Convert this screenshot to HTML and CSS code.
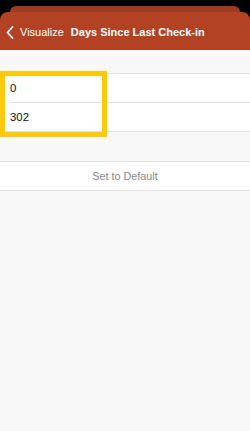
FILE: index.html
```html
<!DOCTYPE html>
<html>
<head>
<meta charset="utf-8">
<link rel="stylesheet" href="styles.css">
</head>
<body>
<div class="screen">
  <div class="stack">
    <div class="back-card"></div>
    <header class="navbar">
      <a class="back">
        <svg class="chev" width="8" height="13" viewBox="0 0 8 13"><path d="M6.5 1 L1.5 6.5 L6.5 12" fill="none" stroke="#fff" stroke-width="1.8" stroke-linecap="round" stroke-linejoin="round"/></svg>
        <span>Visualize</span>
      </a>
      <h1 class="title">Days Since Last Check-in</h1>
    </header>
  </div>
  <main class="content">
    <section class="group values">
      <div class="row">0</div>
      <div class="row">302</div>
      <div class="highlight"></div>
    </section>
    <section class="group">
      <div class="row action">Set to Default</div>
    </section>
  </main>
</div>
</body>
</html>
```

FILE: styles.css
```css
* { box-sizing: border-box; }
html, body { margin: 0; padding: 0; }
body {
  width: 250px;
  height: 431px;
  background: #000;
  font-family: "Liberation Sans", Arial, sans-serif;
  overflow: hidden;
}
.screen {
  display: flex;
  flex-direction: column;
  height: 431px;
}
.stack {
  position: relative;
  padding-top: 12px;
}
.back-card {
  position: absolute;
  top: 6px;
  left: 10px;
  right: 10px;
  height: 20px;
  background: #9c3a22;
  border-radius: 6px 6px 0 0;
}
.navbar {
  position: relative;
  height: 38px;
  background: #b34224;
  border-radius: 8px 8px 0 0;
  display: flex;
  align-items: center;
  padding-left: 6px;
  color: #fff;
  padding-top: 2px;
}
.back {
  display: flex;
  align-items: center;
  gap: 6px;
  font-size: 11px;
  color: #fff;
  margin-right: 7px;
}
.chev { display: block; }
.title {
  margin: 0;
  font-size: 11px;
  font-weight: 700;
}
.content {
  flex: 1;
  background: #f8f8f8;
  padding-top: 23px;
}
.group {
  background: #fff;
  border-top: 1px solid #e3e3e3;
  border-bottom: 1px solid #e3e3e3;
  position: relative;
}
.values { margin-bottom: 29px; }
.row {
  height: 28px;
  display: flex;
  align-items: center;
  padding-left: 10px;
  font-size: 11.4px;
  color: #111;
}
.values .row + .row {
  border-top: 1px solid #e3e3e3;
  height: 29px;
  margin-left: 10px;
  padding-left: 0;
}
.action {
  justify-content: center;
  padding-left: 0;
  color: #888;
  font-size: 10.8px;
}
.highlight {
  position: absolute;
  left: 0;
  top: -3px;
  width: 107px;
  height: 66px;
  border: 5px solid #fcc90c;
}
```
